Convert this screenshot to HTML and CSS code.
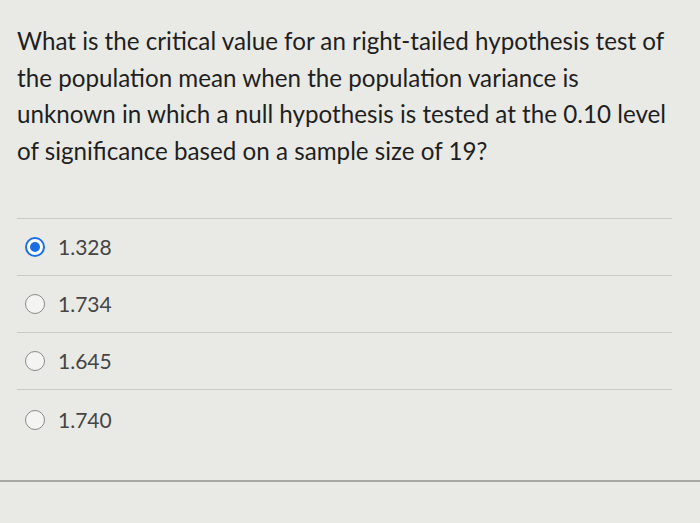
FILE: index.html
```html
<!DOCTYPE html>
<html>
<head>
<meta charset="utf-8">
<link rel="stylesheet" href="styles.css">
</head>
<body>
<div class="page">
  <div class="question">What is the critical value for an right-tailed hypothesis test of the population mean when the population variance is unknown in which a null hypothesis is tested at the 0.10 level of significance based on a sample size of 19?</div>
  <div class="options">
    <div class="option"><span class="radio selected"><span class="dot"></span></span><span class="label">1.328</span></div>
    <div class="option"><span class="radio"></span><span class="label">1.734</span></div>
    <div class="option"><span class="radio"></span><span class="label">1.645</span></div>
    <div class="option last"><span class="radio"></span><span class="label">1.740</span></div>
  </div>
  <div class="bottom-rule"></div>
</div>
</body>
</html>
```

FILE: styles.css
```css
html, body {
  margin: 0;
  padding: 0;
  background: #e9eae5;
}
.page {
  width: 700px;
  height: 523px;
  background: #e9eae5;
  font-family: Lato, "Open Sans", sans-serif;
  overflow: hidden;
}
.question {
  padding: 23px 0 0 17px;
  font-size: 24.2px;
  line-height: 36.7px;
  color: #1f1f1f;
  width: 670px;
  box-sizing: border-box;
}
.options {
  margin: 48px 28px 0 17px;
  border-top: 1px solid #c9cac5;
}
.option {
  display: flex;
  align-items: center;
  height: 57px;
  border-bottom: 1px solid #c9cac5;
  padding-left: 8px;
  box-sizing: border-box;
}
.option.last {
  border-bottom: none;
  height: 90px;
  padding-bottom: 30px;
}
.radio {
  width: 20px;
  height: 20px;
  box-sizing: border-box;
  border: 1.5px solid #8a8b88;
  border-radius: 50%;
  background: #f4f5f2;
  display: flex;
  align-items: center;
  justify-content: center;
  margin-right: 13px;
  flex: none;
}
.radio.selected {
  border: 2.5px solid #1b6fe3;
  background: #ffffff;
}
.dot {
  width: 10px;
  height: 10px;
  border-radius: 50%;
  background: #1b6fe3;
}
.label {
  font-size: 21px;
  color: #454545;
}
.bottom-rule {
  height: 0;
  border-top: 2px solid #a8a9a4;
}
```
